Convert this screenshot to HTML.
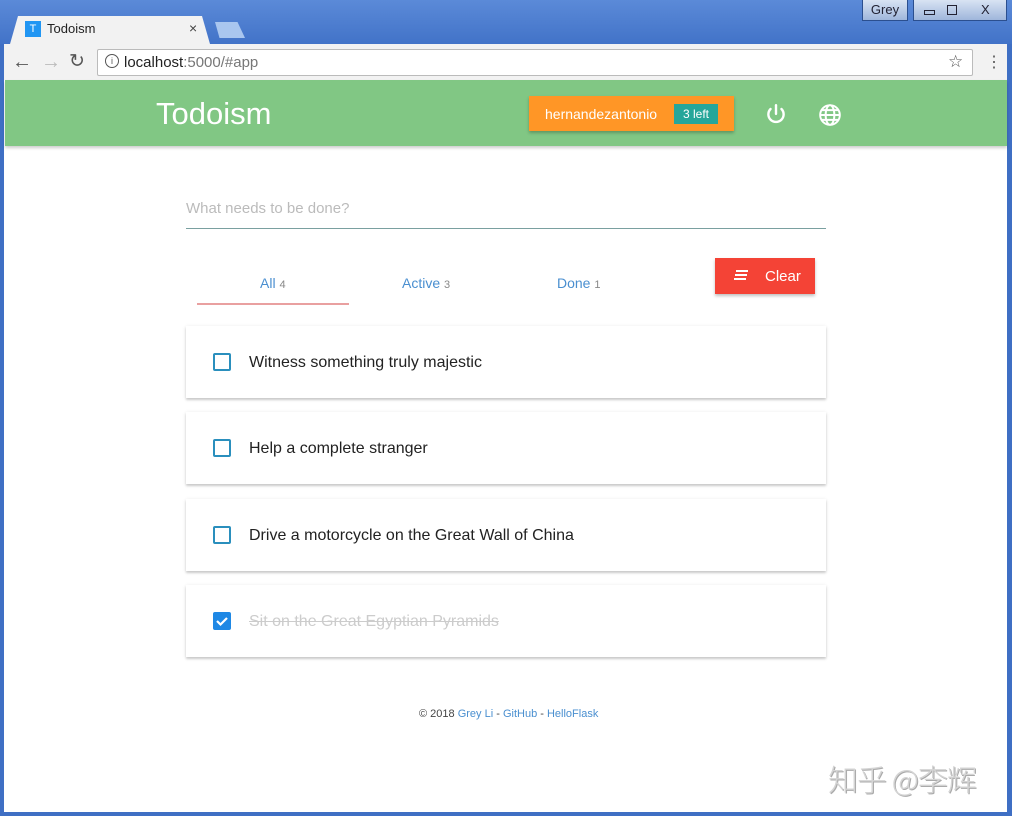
<!DOCTYPE html><html><head><style>
body{margin:0;width:1012px;height:816px;overflow:hidden;background:#3f6fc4;font-family:"Liberation Sans",sans-serif;position:relative}
.a{position:absolute}
.card{position:absolute;left:186px;width:640px;height:72px;background:#fff;box-shadow:0 2px 2px rgba(0,0,0,.14),0 1px 4px rgba(0,0,0,.12);}
.cb{position:absolute;left:27px;top:27px;width:14px;height:14px;border:2px solid #2a8fbd;border-radius:2px}
.t{position:absolute;left:63px;top:28px;font-size:16px;color:#222}
</style></head><body>
<div class="a" style="left:0;top:0;width:1012px;height:44px;background:linear-gradient(#5b8ad8,#4273c8)"></div>
<div class="a" style="left:862px;top:0;width:44px;height:20px;background:linear-gradient(#d8e3f3,#9fb6db);border:1px solid #2b4f8f;border-top:0;font-size:13px;text-align:center;line-height:20px;color:#223">Grey</div>
<div class="a" style="left:913px;top:0;width:92px;height:20px;background:linear-gradient(#d8e3f3,#9fb6db);border:1px solid #2b4f8f;border-top:0"></div>
<div class="a" style="left:924px;top:10px;width:9px;height:3px;border:1px solid #223"></div>
<div class="a" style="left:947px;top:5px;width:8px;height:8px;border:1px solid #223"></div>
<div class="a" style="left:981px;top:2px;font-size:13px;color:#223">X</div>
<div class="a" style="left:10px;top:16px;width:200px;height:28px;background:#f2f2f2;clip-path:polygon(4% 0,96% 0,100% 100%,0 100%)"></div>
<div class="a" style="left:25px;top:21px;width:16px;height:16px;background:#2196f3;color:#fff;font-size:11px;text-align:center;line-height:16px">T</div>
<div class="a" style="left:47px;top:21px;font-size:13px;color:#222">Todoism</div>
<div class="a" style="left:189px;top:20px;font-size:14px;color:#444">×</div>
<div class="a" style="left:215px;top:22px;width:30px;height:16px;background:#a9c6ef;clip-path:polygon(0 0,75% 0,100% 100%,15% 100%)"></div>
<div class="a" style="left:4px;top:44px;width:1003px;height:36px;background:#f2f2f2"></div>
<div class="a" style="left:12px;top:51px;font-size:20px;color:#555">←</div>
<div class="a" style="left:41px;top:51px;font-size:20px;color:#bbb">→</div>
<div class="a" style="left:69px;top:50px;font-size:19px;color:#555">↻</div>
<div class="a" style="left:97px;top:49px;width:874px;height:25px;background:#fff;border:1px solid #bbb;border-radius:2px"></div>
<div class="a" style="left:105px;top:54px;width:12px;height:12px;border:1.5px solid #555;border-radius:50%;font-size:9px;text-align:center;line-height:12px;color:#555">i</div>
<div class="a" style="left:124px;top:54px;font-size:15px;color:#222">localhost<span style="color:#777">:5000/#app</span></div>
<div class="a" style="left:948px;top:52px;font-size:17px;color:#555">☆</div>
<div class="a" style="left:986px;top:52px;font-size:16px;color:#555">⋮</div>
<div class="a" style="left:4px;top:80px;width:1003px;height:732px;background:#fff"></div>
<div class="a" style="left:5px;top:80px;width:1002px;height:66px;background:#81c784;box-shadow:0 2px 3px rgba(0,0,0,.2)"></div>
<div class="a" style="left:156px;top:96px;font-size:31px;color:#fff">Todoism</div>
<div class="a" style="left:529px;top:96px;width:205px;height:35px;background:#ff9626;box-shadow:0 2px 3px rgba(0,0,0,.25)"></div>
<div class="a" style="left:545px;top:106px;font-size:14px;color:#fff">hernandezantonio</div>
<div class="a" style="left:674px;top:104px;width:44px;height:20px;background:#26a69a;color:#fff;font-size:12px;text-align:center;line-height:20px">3 left</div>
<svg class="a" style="left:764px;top:103px" width="24" height="24" viewBox="0 0 22 22" fill="none" stroke="#fff" stroke-width="2.2" stroke-linecap="round"><path d="M11 2v8"/><path d="M6 5.5a7 7 0 1 0 10 0"/></svg>
<svg class="a" style="left:818px;top:103px" width="24" height="24" viewBox="0 0 22 22" fill="none" stroke="#fff" stroke-width="1.8"><circle cx="11" cy="11" r="9"/><ellipse cx="11" cy="11" rx="4" ry="9"/><path d="M2 11h18M3.5 6.5h15M3.5 15.5h15"/></svg>
<div class="a" style="left:186px;top:200px;font-size:15px;color:#bbb">What needs to be done?</div>
<div class="a" style="left:186px;top:228px;width:640px;height:1px;background:#7aa0a0"></div>
<div class="a" style="left:260px;top:275px;font-size:14px;color:#4a8fd0">All <span style="font-size:11px;color:#888">4</span></div>
<div class="a" style="left:402px;top:275px;font-size:14px;color:#4a8fd0">Active <span style="font-size:11px;color:#888">3</span></div>
<div class="a" style="left:557px;top:275px;font-size:14px;color:#4a8fd0">Done <span style="font-size:11px;color:#888">1</span></div>
<div class="a" style="left:197px;top:303px;width:152px;height:2px;background:#e9a0a0"></div>
<div class="a" style="left:715px;top:258px;width:100px;height:36px;background:#f44336;box-shadow:0 2px 3px rgba(0,0,0,.25)"></div>
<div class="a" style="left:736px;top:270px;width:12px;height:2px;background:#fff;box-shadow:-1px 4px 0 #fff,-2px 8px 0 #fff"></div>
<div class="a" style="left:765px;top:268px;font-size:15px;color:#fff">Clear</div>
<div class="card" style="top:326px"><div class="cb"></div><div class="t">Witness something truly majestic</div></div>
<div class="card" style="top:412px"><div class="cb"></div><div class="t">Help a complete stranger</div></div>
<div class="card" style="top:499px"><div class="cb"></div><div class="t">Drive a motorcycle on the Great Wall of China</div></div>
<div class="card" style="top:585px"><div class="cb" style="background:#1e88e5;width:18px;height:18px;border:0"><svg width="18" height="18"><path d="M4 9l3.5 3.5L14 6" fill="none" stroke="#fff" stroke-width="2.2"/></svg></div><div class="t" style="color:#ccc;text-decoration:line-through">Sit on the Great Egyptian Pyramids</div></div>
<div class="a" style="left:419px;top:708px;font-size:11px;color:#444">© 2018 <span style="color:#4a8fd0">Grey Li</span> - <span style="color:#4a8fd0">GitHub</span> - <span style="color:#4a8fd0">HelloFlask</span></div>
<div class="a" style="left:828px;top:756px;font-size:30px;font-weight:300;color:#d4d4d4;font-family:'Noto Sans CJK SC',sans-serif;text-shadow:1px 1px 0 #aaa;letter-spacing:-1px">知乎 @李辉</div>
</body></html>
